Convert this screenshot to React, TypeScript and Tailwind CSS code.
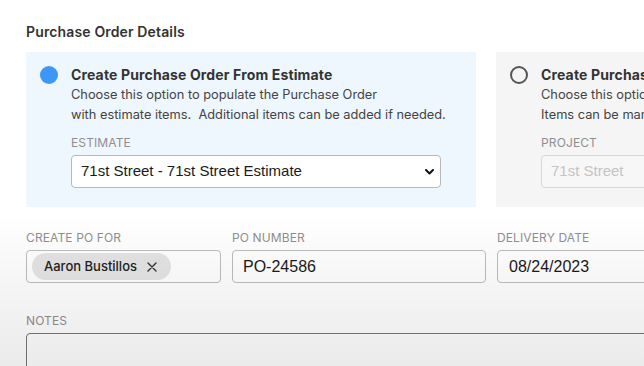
import React from "react";

const sans = { fontFamily: "Inter, 'Noto Sans', sans-serif" };

function Label({ children }: { children: React.ReactNode }) {
  return (
    <div className="text-[12px] leading-[14px] tracking-[0.01em] text-[#8f8f8f] uppercase mb-[5px]">
      {children}
    </div>
  );
}

export default function App() {
  return (
    <div className="relative w-[644px] h-[366px] overflow-hidden bg-white" style={sans}>
      <div className="pl-[26px] pt-[24px]">
        <h2 className="text-[14px] leading-[16px] font-semibold text-[#333] tracking-[0.01em]">Purchase Order Details</h2>

        <div className="mt-[12px] flex gap-[20px] w-[920px]">
          {/* Card 1 */}
          <div className="w-[450px] h-[155px] bg-[#eef6fe] pl-[14px] pt-[13px] flex gap-[13px] shrink-0">
            <div className="w-[18px] h-[18px] rounded-full bg-[#3d97f8] mt-[1px] shrink-0" />
            <div className="flex flex-col">
              <div className="text-[14px] leading-[20px] font-bold text-[#333] tracking-[0.01em]">Create Purchase Order From Estimate</div>
              <div className="text-[12.8px] leading-[20px] text-[#444]">
                Choose this option to populate the Purchase Order
                <br />
                with estimate items.&nbsp; Additional items can be added if needed.
              </div>
              <div className="mt-[11px]">
                <Label>Estimate</Label>
                <div className="relative w-[370px] h-[33px] bg-white border border-[#b9b9b9] rounded-[4px] flex items-center pl-[9px]">
                  <span className="text-[15px] text-[#1a1a1a]" style={{ fontFamily: "'Liberation Sans', Arial, sans-serif" }}>
                    71st Street - 71st Street Estimate
                  </span>
                  <svg className="absolute right-[6px] top-[13px]" width="9" height="6" viewBox="0 0 9 6">
                    <path d="M1 1 L4.5 4.5 L8 1" fill="none" stroke="#111" strokeWidth="2" strokeLinecap="round" strokeLinejoin="round" />
                  </svg>
                </div>
              </div>
            </div>
          </div>
          {/* Card 2 */}
          <div className="w-[450px] h-[155px] bg-[#f5f5f5] pl-[14px] pt-[13px] flex gap-[13px] shrink-0">
            <div className="w-[18px] h-[18px] rounded-full border-2 border-[#555] mt-[1px] shrink-0" />
            <div className="flex flex-col">
              <div className="text-[14px] leading-[20px] font-bold text-[#333] tracking-[0.01em]">Create Purchase Order From Project</div>
              <div className="text-[12.8px] leading-[20px] text-[#444]">
                Choose this option to create a Purchase Order
                <br />
                Items can be manually added to the Purchase Order.
              </div>
              <div className="mt-[11px]">
                <Label>Project</Label>
                <div className="w-[370px] h-[33px] bg-[#f7f7f7] border border-[#d6d6d6] rounded-[4px] flex items-center pl-[9px]">
                  <span className="text-[15px] text-[#c4c4c4]" style={{ fontFamily: "'Liberation Sans', Arial, sans-serif" }}>
                    71st Street
                  </span>
                </div>
              </div>
            </div>
          </div>
        </div>

        <div className="mt-[24px] flex gap-[11px] w-[700px]">
          <div className="w-[195px] shrink-0">
            <Label>Create PO For</Label>
            <div className="h-[33px] bg-white border border-[#bdbdbd] rounded-[4px] flex items-center pl-[5px]">
              <div className="h-[27px] rounded-full bg-[#e4e4e4] flex items-center pl-[12px] pr-[14px] gap-[10px]">
                <span className="text-[13px] font-medium text-[#222]">Aaron Bustillos</span>
                <svg width="10" height="10" viewBox="0 0 10 10">
                  <path d="M1 1 L9 9 M9 1 L1 9" stroke="#333" strokeWidth="1.4" strokeLinecap="round" />
                </svg>
              </div>
            </div>
          </div>
          <div className="w-[254px] shrink-0">
            <Label>PO Number</Label>
            <div className="h-[33px] bg-white border border-[#bdbdbd] rounded-[4px] flex items-center pl-[10px]">
              <span className="text-[16px] text-[#1a1a1a]" style={{ fontFamily: "'Liberation Sans', Arial, sans-serif" }}>PO-24586</span>
            </div>
          </div>
          <div className="w-[200px] shrink-0">
            <Label>Delivery Date</Label>
            <div className="h-[33px] bg-white border border-[#bdbdbd] rounded-[4px] flex items-center pl-[11px]">
              <span className="text-[16px] text-[#1a1a1a]" style={{ fontFamily: "'Liberation Sans', Arial, sans-serif" }}>08/24/2023</span>
            </div>
          </div>
        </div>

        <div className="mt-[31px] w-[700px]">
          <Label>Notes</Label>
          <div className="h-[80px] bg-white border border-[#777] rounded-[4px]" />
        </div>
      </div>
      <div className="pointer-events-none absolute left-0 right-0 top-[210px] bottom-0 bg-gradient-to-b from-black/0 to-black/[0.08]" />
    </div>
  );
}
